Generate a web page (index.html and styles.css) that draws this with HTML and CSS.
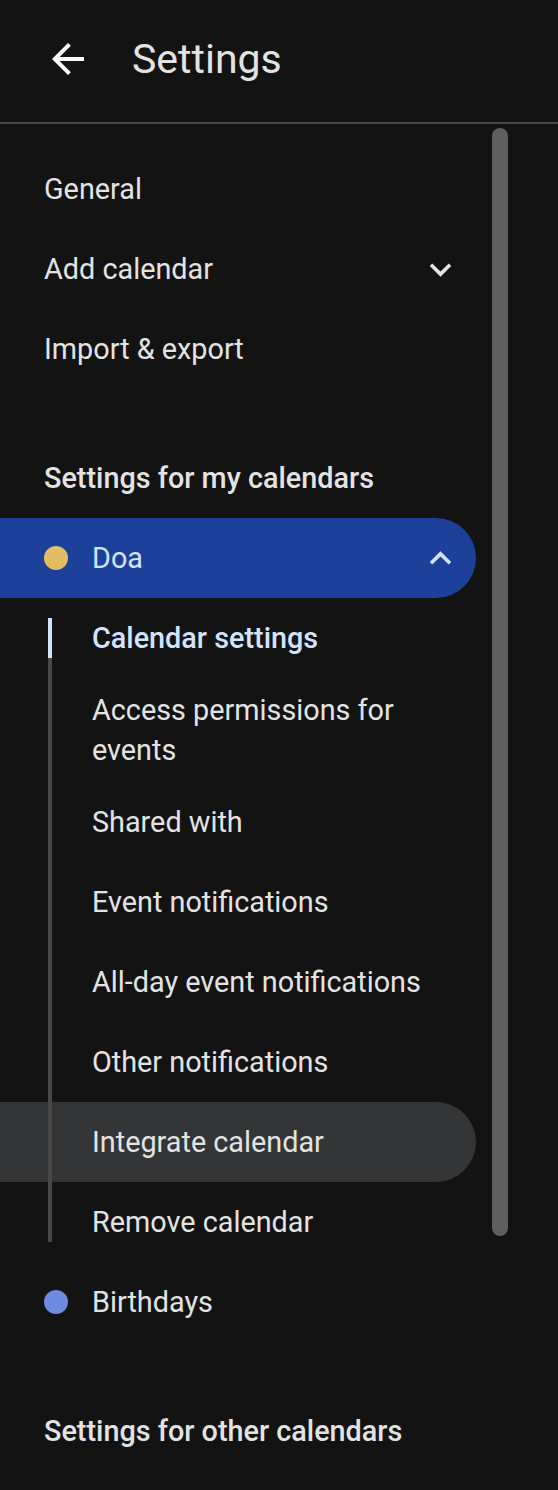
FILE: index.html
```html
<!DOCTYPE html>
<html lang="en">
<head>
    <meta charset="UTF-8">
    <meta name="viewport" content="width=device-width, initial-scale=1.0">
    <title>Settings</title>
    <link rel="stylesheet" href="styles.css">
</head>
<body>
    <div class="page">
        <header class="topbar">
            <button class="back" aria-label="Back">
                <svg viewBox="0 0 24 24" width="48" height="48"><path d="M20 11H7.83l5.59-5.59L12 4l-8 8 8 8 1.41-1.41L7.83 13H20v-2z"/></svg>
            </button>
            <h1 class="title">Settings</h1>
        </header>

        <div class="scroll">
            <nav class="menu">
                <a class="item">General</a>
                <a class="item">
                    <span class="label">Add calendar</span>
                    <svg class="chevron" viewBox="0 0 24 24" width="43" height="43"><path d="M16.59 8.59L12 13.17 7.41 8.59 6 10l6 6 6-6z"/></svg>
                </a>
                <a class="item">Import &amp; export</a>

                <h2 class="section">Settings for my calendars</h2>

                <a class="item cal open">
                    <span class="dot doa"></span>
                    <span class="label">Doa</span>
                    <svg class="chevron" viewBox="0 0 24 24" width="43" height="43"><path d="M12 8l-6 6 1.41 1.41L12 10.83l4.59 4.58L18 14z"/></svg>
                </a>
                <div class="sublist">
                    <a class="sub active">Calendar settings</a>
                    <a class="sub">Access permissions for events</a>
                    <a class="sub">Shared with</a>
                    <a class="sub">Event notifications</a>
                    <a class="sub">All-day event notifications</a>
                    <a class="sub">Other notifications</a>
                    <a class="sub hover">Integrate calendar</a>
                    <a class="sub">Remove calendar</a>
                </div>
                <a class="item cal">
                    <span class="dot bday"></span>
                    <span class="label">Birthdays</span>
                </a>

                <h2 class="section">Settings for other calendars</h2>
            </nav>
            <div class="scrollbar"></div>
        </div>
    </div>
</body>
</html>
```

FILE: styles.css
```css
body { margin: 0; background: #131313; color: #e3e3e3; font-family: Roboto, 'Noto Sans', sans-serif; }
.page { width: 558px; height: 1490px; overflow: hidden; }

.topbar { height: 124px; box-sizing: border-box; display: flex; align-items: center; padding: 0 0 4px 44px; border-bottom: 2px solid #444746; }
.back { width: 48px; height: 48px; padding: 0; border: 0; background: none; display: flex; }
.back svg { fill: #ffffff; }
.title { margin: 0 0 0 40px; font-size: 41px; font-weight: 400; color: #e3e3e3; }

.scroll { position: relative; }
.scrollbar { position: absolute; left: 492px; top: 4px; width: 16px; height: 1108px; border-radius: 8px; background: #5f5f5f; }

.menu { width: 476px; padding-top: 25px; display: flex; flex-direction: column; }
.item { height: 80px; display: flex; align-items: center; padding: 0 14px 0 44px; font-size: 28.8px; line-height: 40px; color: #e3e3e3; }
.item .label { flex: 1; }
.chevron { fill: #e3e3e3; flex: none; }

.section { height: 80px; margin: 49px 0 0; padding-left: 44px; display: flex; align-items: center; font-size: 28.8px; font-weight: 500; color: #e3e3e3; }

.cal .dot { width: 24px; height: 24px; border-radius: 50%; margin-right: 24px; flex: none; }
.doa { background: #e2bd63; }
.bday { background: #6f8be0; }
.open { background: #1d419b; border-radius: 0 40px 40px 0; color: #d3e3fd; }
.open .chevron { fill: #d3e3fd; }

.sublist { position: relative; display: flex; flex-direction: column; }
.sublist::before { content: ""; position: absolute; left: 48px; top: 60px; bottom: 20px; width: 4px; background: #474747; z-index: 1; }
.sub { position: relative; min-height: 80px; box-sizing: border-box; display: flex; align-items: center; padding: 12px 20px 12px 92px; font-size: 28.8px; line-height: 40px; color: #e3e3e3; }
.sub.active { color: #d3e3fd; font-weight: 500; }
.sub.active::before { content: ""; position: absolute; left: 48px; top: 20px; width: 4px; height: 40px; background: #d3e3fd; }
.sub.hover { background: #333537; border-radius: 0 40px 40px 0; }
```
